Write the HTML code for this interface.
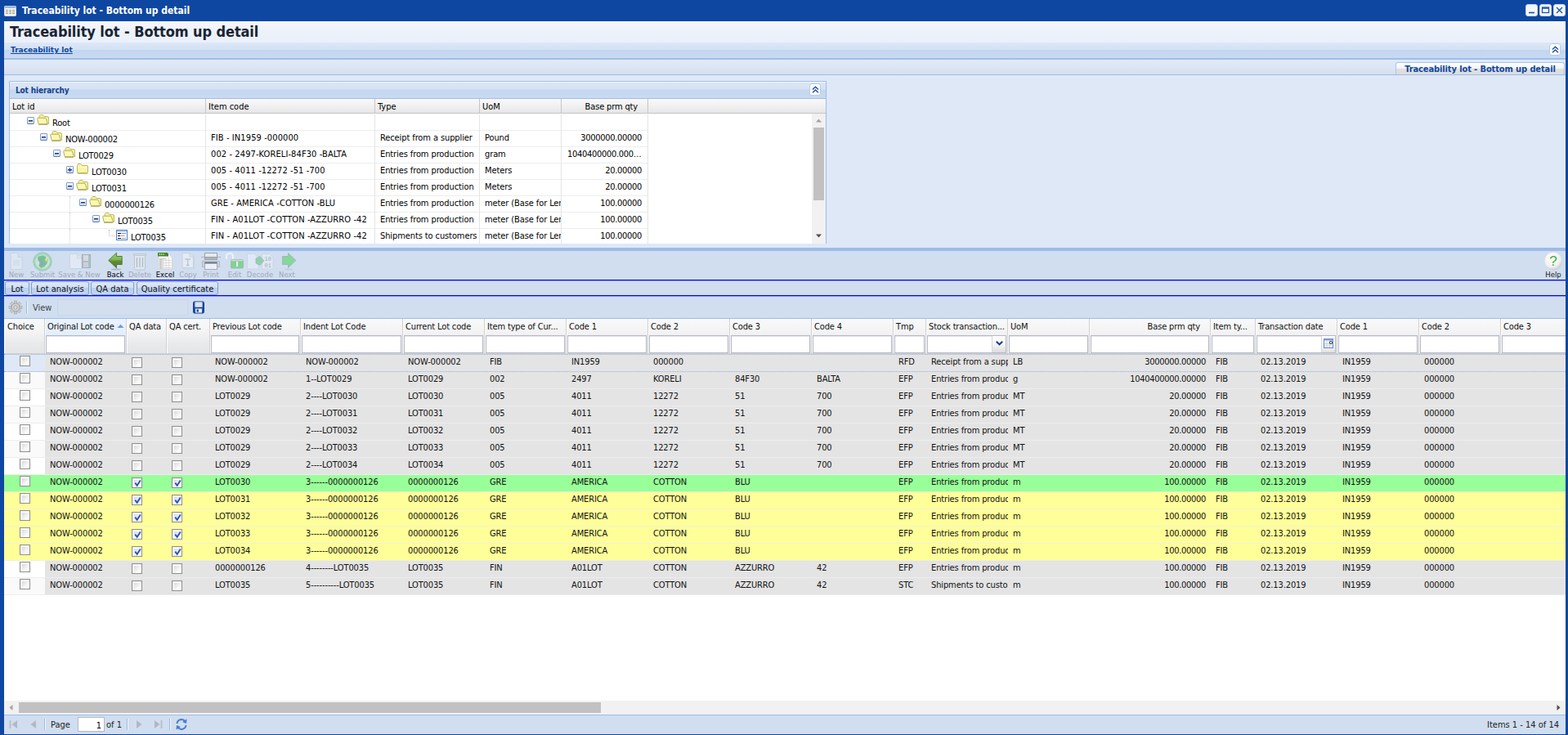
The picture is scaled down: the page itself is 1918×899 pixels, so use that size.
<!DOCTYPE html>
<html><head><meta charset="utf-8"><title>Traceability lot - Bottom up detail</title>
<style>
*{box-sizing:border-box;margin:0;padding:0}
html,body{width:1918px;height:899px;overflow:hidden;background:#0e47a1}
body{font:11px/13px "DejaVu Sans Condensed", "Liberation Sans", sans-serif;color:#000;position:relative}
.abs{position:absolute}
.t{position:absolute;white-space:nowrap;overflow:hidden}
svg{position:absolute;overflow:visible}
#content{position:absolute;left:5px;top:26px;width:1910px;height:872px;background:#d0def0}

#titlebar{position:absolute;left:0;top:0;width:1918px;height:26px;background:#0e47a1}
#titlebar .tt{position:absolute;left:27px;top:5px;font:bold 12px/16px "DejaVu Sans Condensed", "Liberation Sans", sans-serif;color:#fff;white-space:nowrap}
.wbtn{position:absolute;top:5px;width:15px;height:15px;background:#f3f7fd;border:1px solid #c5d6ee;border-radius:3px}
#pghead{position:absolute;left:5px;top:26px;width:1910px;height:26px;background:linear-gradient(#f5f8fc,#edf2fa 50%,#eaf0fa)}
#pghead .h{position:absolute;left:7px;top:0px;letter-spacing:-0.1px;font:bold 18px/25px "DejaVu Sans Condensed", "Liberation Sans", sans-serif;color:#1a2433;white-space:nowrap}
#crumb{position:absolute;left:5px;top:52px;width:1910px;height:21px;background:linear-gradient(#dde8f7 0,#d3e1f4 45%,#c3d6f0 50%,#c9daf2 100%);border-bottom:2px solid #9dbde9}
#crumb a{position:absolute;left:8px;top:3px;font:bold 9px/13px "DejaVu Sans","Liberation Sans",sans-serif;color:#0e47a1;text-decoration:underline;white-space:nowrap}
.collapse{position:absolute;width:14px;height:15px;background:#fdfeff;border:1px solid #b5cbea;border-radius:3px}
#tabstrip{position:absolute;left:5px;top:73px;width:1910px;height:19px;background:linear-gradient(#e1eaf7,#dce6f4 50%,#d4dff0);border-bottom:1px solid #9dbde9}
#rtab{position:absolute;left:1702px;top:3px;width:207px;height:15px;border:1px solid #a9c3ea;border-bottom:none;border-radius:3px 3px 0 0;background:linear-gradient(#ffffff 0,#f4f4f4 45%,#e0e0e0 55%,#dcdcdc 100%);font:bold 11px/15px "DejaVu Sans Condensed", "Liberation Sans", sans-serif;color:#0e47a1;text-align:center;white-space:nowrap;overflow:hidden;letter-spacing:-0.1px}
#bodybg{position:absolute;left:5px;top:92px;width:1910px;height:211px;background:#dfe8f6}


#lot{position:absolute;left:11px;top:99px;width:1000px;height:199px;border:1px solid #9dbde9;border-bottom:none;background:#fff;overflow:hidden}
#lot .hd{position:absolute;left:0;top:0;width:998px;height:21px;background:linear-gradient(#dbe7f7 0,#d5e2f5 45%,#c5d7f0 50%,#c9daf1 100%);border-bottom:1px solid #9dbde9;box-shadow:inset 0 1px 0 #f4f8fd}
#lot .hd span{position:absolute;left:7px;top:4px;letter-spacing:-0.15px;font:bold 10px/13px "DejaVu Sans Condensed", "Liberation Sans", sans-serif;color:#15428b;white-space:nowrap}
#lot .ch{position:absolute;left:0;top:21px;width:998px;height:18px;background:linear-gradient(#f9f9f9 0,#f1f1f1 50%,#e6e6e6 100%);border-bottom:1px solid #c5c5c5}
#lot .ch div{position:absolute;top:0;height:17px;border-right:1px solid #c5c5c5;padding:3px 0 0 3px;white-space:nowrap;overflow:hidden;line-height:13px}
.tr{position:absolute;left:0;width:781px;height:20px;border-bottom:1px solid #ededed}
.tr .c{position:absolute;top:0;height:20px;border-right:1px solid #e4e4e4;padding:2px 6px 0 6px;white-space:nowrap;overflow:hidden;line-height:13px;letter-spacing:-0.1px}
.tr .c0{left:0;width:240px;padding:0}
.tr .c1{left:240px;width:207px;letter-spacing:.1px}
.tr .c2{left:447px;width:128px}
.tr .c3{left:575px;width:100px}
.tr .c4{left:675px;width:106px;text-align:right;text-overflow:ellipsis;letter-spacing:-0.3px;padding-left:7px;padding-right:7px}
.tr .lbl{position:absolute;top:4px;line-height:13px;white-space:nowrap;letter-spacing:-0.2px}
.exp{position:absolute;width:9px;height:9px;border:1px solid #7d9bcb;border-bottom-color:#5d7fb3;border-radius:1.5px;background:linear-gradient(#fff 30%,#c8d8f0)}
.exp i{position:absolute;left:1px;top:3px;width:5px;height:1px;background:#16336e;box-shadow:0 .5px 0 #16336e}
.exp b{position:absolute;left:3px;top:1px;width:1px;height:5px;background:#1d3f7a}
.vsb{position:absolute;left:981px;top:39px;width:17px;height:159px;background:#f1f1f1}
.vsb .th{position:absolute;left:2px;top:17px;width:13px;height:89px;background:#c1c1c1}


#split{position:absolute;left:5px;top:303px;width:1910px;height:4px;background:#9cbbe8}
#tb{position:absolute;left:5px;top:307px;width:1910px;height:35px;background:#d0def0}
#tb .b{position:absolute;top:0;height:35px}
#tb .b span{position:absolute;left:50%;top:23px;transform:translateX(-50%);font:8.5px/12px "DejaVu Sans","Liberation Sans",sans-serif;white-space:nowrap;color:#000}
#tb .dis span{color:#a3a8b8}
.bl{position:absolute;left:5px;width:1910px;height:2px;background:linear-gradient(#0000ff 0,#0000ff 50%,rgba(0,0,255,.3) 50%,rgba(0,0,255,.3) 100%)}
#tabs{position:absolute;left:5px;top:344px;width:1910px;height:17px;background:#d0def0}
.tbtn{position:absolute;top:0px;height:17px;border:1px solid #7f9fca;border-radius:3px;background:linear-gradient(#dce7f7 0,#d2e0f4 45%,#b9cfee 50%,#c3d6f0 100%);font:11px/15px "DejaVu Sans Condensed", "Liberation Sans", sans-serif;padding-top:1px;text-align:center;color:#111;white-space:nowrap}
#vtb{position:absolute;left:5px;top:363px;width:1910px;height:27px;background:#d0def0;border-bottom:1px solid #9dbde9}
#vtb .fld{position:absolute;left:65px;top:3px;width:160px;height:20px;background:#d3dfef;border:1px solid #c9d7ea}


#grid{position:absolute;left:5px;top:390px;width:1910px;height:484px;background:#fff;overflow:hidden}
#gh{position:absolute;left:0;top:0;width:1910px;height:43px;background:linear-gradient(#f9f9f9 0,#f3f3f4 40%,#e9eaeb 70%,#e4e5e7 100%);border-bottom:1px solid #d0d0d0}
#gh .h{position:absolute;top:0;height:42px;border-right:1px solid #d0d0d0;border-left:1px solid #fdfdfd;padding:3px 0 0 2px;white-space:nowrap;overflow:hidden;color:#111;letter-spacing:-0.15px}
#gh .h.r{text-align:right;padding-right:12px}
#gh .h.sort{background:linear-gradient(#ebf3fd,#d9e8fb);}
#gh .f{position:absolute;top:20px;height:22px;background:#fff;border:1px solid #b5b8c8;box-shadow:inset 0 1px 1px #e3e6ee}
.gr{position:absolute;left:0;width:1910px;height:21px;background:#e4e4e4;border-bottom:1px solid #ededed}
.gr .c{position:absolute;top:0;height:20px;padding:2px 0 0 6px;white-space:nowrap;overflow:hidden;line-height:13px;color:#111;letter-spacing:-0.12px}
.gr .c.r{text-align:right;padding:2px 6px 0 0;letter-spacing:-0.3px}
.gr .c0{left:0;width:50px;height:20px;position:absolute;top:0}
.cb{position:absolute;width:13px;height:13px;border:1px solid #8f8f8f;background:#fff;box-shadow:inset 0 0 0 1px #f1f1f1}
.cb:before{content:"";position:absolute;left:2px;top:2px;width:9px;height:9px;background:linear-gradient(135deg,#d9d9d9,#fdfdfd 70%)}
.cb.on:before{border:0}
.gr.sel{border-top:1px dotted #8eb0e0;border-bottom:1px dotted #8eb0e0}
#hsb{position:absolute;left:0;top:467px;width:1910px;height:17px;background:#f1f1f1}
#hsb .th{position:absolute;left:18px;top:2px;width:712px;height:13px;background:#c1c1c1}
#pg{position:absolute;left:5px;top:874px;width:1910px;height:24px;background:#d0def0;border-top:1px solid #9dbde9}
#pg .sep{position:absolute;top:4px;width:1px;height:14px;background:#9fb9dc;border-right:1px solid #f4f8fd;box-sizing:content-box}
#pg .inp{position:absolute;left:90px;top:2px;width:33px;height:18px;background:#fff;border:1px solid #b5b8c8;text-align:right;padding:3px 3px 0 0;line-height:13px}
</style></head>
<body>
<div id="content"></div>
<div id="titlebar">
<svg width="16" height="14" viewBox="0 0 16 14" style="left:5px;top:7px"><rect x="0.5" y="0.5" width="14" height="12" rx="1" fill="#f4f4f2" stroke="#d8d8d8"/><rect x="0.5" y="0.5" width="14" height="2.5" fill="#9bb7e0"/><g stroke="#9a9a9a" stroke-width="1"><path d="M2 5.5h3M6 5.5h3M10 5.5h3M2 7.5h3M6 7.5h3M10 7.5h3M2 9.5h3M6 9.5h3M10 9.5h3"/></g></svg>
<span class="tt">Traceability lot - Bottom up detail</span>
<div class="wbtn" style="left:1866px"><svg width="13" height="13" viewBox="0 0 13 13" style="left:0;top:0"><path d="M3 9.5h7" stroke="#1d4f9f" stroke-width="1.6"/></svg></div>
<div class="wbtn" style="left:1883px"><svg width="13" height="13" viewBox="0 0 13 13" style="left:0;top:0"><rect x="2.5" y="3" width="8" height="6.5" fill="none" stroke="#1d4f9f" stroke-width="1.2"/><path d="M2.5 4h8" stroke="#1d4f9f" stroke-width="1.6"/></svg></div>
<div class="wbtn" style="left:1900px"><svg width="13" height="13" viewBox="0 0 13 13" style="left:0;top:0"><path d="M3 3l7 7M10 3l-7 7" stroke="#1d4f9f" stroke-width="1.3"/></svg></div>
</div>
<div id="pghead"><div class="h">Traceability lot - Bottom up detail</div></div>
<div id="crumb"><a>Traceability lot</a><div class="collapse" style="left:1890px;top:1px"><svg width="9" height="9" viewBox="0 0 9 9" style="left:2px;top:2px"><path d="M1 4.5 L4.5 1.2 L8 4.5 M1 8.3 L4.5 5 L8 8.3" fill="none" stroke="#1d4f9f" stroke-width="1.4"/></svg></div></div>
<div id="tabstrip"><div id="rtab">Traceability lot - Bottom up detail</div></div>
<div id="bodybg"></div>
<div id="lot">
<div class="hd"><span>Lot hierarchy</span><div class="collapse" style="left:978px;top:2px"><svg width="9" height="9" viewBox="0 0 9 9" style="left:2px;top:2px"><path d="M1 4.5 L4.5 1.2 L8 4.5 M1 8.3 L4.5 5 L8 8.3" fill="none" stroke="#1d4f9f" stroke-width="1.4"/></svg></div></div>
<div class="ch"><div style="left:0;width:240px">Lot id</div><div style="left:240px;width:207px">Item code</div><div style="left:447px;width:128px">Type</div><div style="left:575px;width:100px">UoM</div><div style="left:675px;width:106px;text-align:right;padding-right:12px;letter-spacing:-0.15px">Base prm qty</div></div>
<div class="tr" style="top:40px"><div class="c c0"><div class="exp" style="left:21px;top:3px"><i></i></div><svg width="16" height="14" viewBox="0 0 16 14" style="left:33px;top:0px"><path d="M3 2.500 q0-1.500 1.500-2 h2.500 q1 0 1.500 1 l.500 1 h4 q1.500 0 1.500 1.500 v7.500 h-11.500z" fill="#f5f2a0" stroke="#bfb965" stroke-width="1"/><path d="M.700 5.500 q-.300-1.300 1-1.300 h8.500 q1 0 1.300 1 l1.500 5.300 q.300 1.300-1 1.300 h-8.700 q-1 0-1.300-1z" fill="#fbf8b4" stroke="#b3ac58" stroke-width="1"/><path d="M2 12.300h11" stroke="#9c9650" stroke-width="1" opacity=".8"/></svg><span class="lbl" style="left:52px">Root</span></div><div class="c c1"></div><div class="c c2"></div><div class="c c3"></div><div class="c c4"></div></div>
<div class="tr" style="top:60px"><div class="c c0"><div class="exp" style="left:37px;top:3px"><i></i></div><svg width="16" height="14" viewBox="0 0 16 14" style="left:49px;top:0px"><path d="M3 2.500 q0-1.500 1.500-2 h2.500 q1 0 1.500 1 l.500 1 h4 q1.500 0 1.500 1.500 v7.500 h-11.500z" fill="#f5f2a0" stroke="#bfb965" stroke-width="1"/><path d="M.700 5.500 q-.300-1.300 1-1.300 h8.500 q1 0 1.300 1 l1.500 5.300 q.300 1.300-1 1.300 h-8.700 q-1 0-1.300-1z" fill="#fbf8b4" stroke="#b3ac58" stroke-width="1"/><path d="M2 12.300h11" stroke="#9c9650" stroke-width="1" opacity=".8"/></svg><span class="lbl" style="left:68px">NOW-000002</span></div><div class="c c1">FIB - IN1959 -000000</div><div class="c c2">Receipt from a supplier</div><div class="c c3">Pound</div><div class="c c4">3000000.00000</div></div>
<div class="tr" style="top:80px"><div class="c c0"><div class="exp" style="left:53px;top:3px"><i></i></div><svg width="16" height="14" viewBox="0 0 16 14" style="left:65px;top:0px"><path d="M3 2.500 q0-1.500 1.500-2 h2.500 q1 0 1.500 1 l.500 1 h4 q1.500 0 1.500 1.500 v7.500 h-11.500z" fill="#f5f2a0" stroke="#bfb965" stroke-width="1"/><path d="M.700 5.500 q-.300-1.300 1-1.300 h8.500 q1 0 1.300 1 l1.500 5.300 q.300 1.300-1 1.300 h-8.700 q-1 0-1.300-1z" fill="#fbf8b4" stroke="#b3ac58" stroke-width="1"/><path d="M2 12.300h11" stroke="#9c9650" stroke-width="1" opacity=".8"/></svg><span class="lbl" style="left:84px">LOT0029</span></div><div class="c c1">002 - 2497-KORELI-84F30 -BALTA</div><div class="c c2">Entries from production</div><div class="c c3">gram</div><div class="c c4">1040400000.00000</div></div>
<div class="tr" style="top:100px"><div class="c c0"><div class="exp" style="left:69px;top:3px"><i></i><b></b></div><svg width="16" height="14" viewBox="0 0 16 14" style="left:81px;top:0px"><path d="M1.500 2.500 q0-1.500 1.500-2 h2.500 q1 0 1.500 1 l.500 1 h5.500 q1.500 0 1.500 1.500 v6.500 q0 1.500-1.500 1.500 h-10 q-1.500 0-1.500-1.500z" fill="#f8f5a6" stroke="#bdb762" stroke-width="1"/><path d="M2 4.500h11.500" stroke="#fdfbd0" stroke-width="1"/><path d="M2 11.800h12" stroke="#9c9650" stroke-width="1" opacity=".8"/></svg><span class="lbl" style="left:100px">LOT0030</span></div><div class="c c1">005 - 4011 -12272 -51 -700</div><div class="c c2">Entries from production</div><div class="c c3">Meters</div><div class="c c4">20.00000</div></div>
<div class="tr" style="top:120px"><div class="c c0"><div class="exp" style="left:69px;top:3px"><i></i></div><svg width="16" height="14" viewBox="0 0 16 14" style="left:81px;top:0px"><path d="M3 2.500 q0-1.500 1.500-2 h2.500 q1 0 1.500 1 l.500 1 h4 q1.500 0 1.500 1.500 v7.500 h-11.500z" fill="#f5f2a0" stroke="#bfb965" stroke-width="1"/><path d="M.700 5.500 q-.300-1.300 1-1.300 h8.500 q1 0 1.300 1 l1.500 5.300 q.300 1.300-1 1.300 h-8.700 q-1 0-1.300-1z" fill="#fbf8b4" stroke="#b3ac58" stroke-width="1"/><path d="M2 12.300h11" stroke="#9c9650" stroke-width="1" opacity=".8"/></svg><span class="lbl" style="left:100px">LOT0031</span></div><div class="c c1">005 - 4011 -12272 -51 -700</div><div class="c c2">Entries from production</div><div class="c c3">Meters</div><div class="c c4">20.00000</div></div>
<div class="tr" style="top:140px"><div class="c c0"><div class="abs" style="left:73px;top:0;width:1px;height:20px;border-left:1px dotted #cfcfcf"></div><div class="exp" style="left:85px;top:3px"><i></i></div><svg width="16" height="14" viewBox="0 0 16 14" style="left:97px;top:0px"><path d="M3 2.500 q0-1.500 1.500-2 h2.500 q1 0 1.500 1 l.500 1 h4 q1.500 0 1.500 1.500 v7.500 h-11.500z" fill="#f5f2a0" stroke="#bfb965" stroke-width="1"/><path d="M.700 5.500 q-.300-1.300 1-1.300 h8.500 q1 0 1.300 1 l1.500 5.300 q.300 1.300-1 1.300 h-8.700 q-1 0-1.300-1z" fill="#fbf8b4" stroke="#b3ac58" stroke-width="1"/><path d="M2 12.300h11" stroke="#9c9650" stroke-width="1" opacity=".8"/></svg><span class="lbl" style="left:116px">0000000126</span></div><div class="c c1">GRE - AMERICA -COTTON -BLU</div><div class="c c2">Entries from production</div><div class="c c3">meter (Base for Length)</div><div class="c c4">100.00000</div></div>
<div class="tr" style="top:160px"><div class="c c0"><div class="abs" style="left:73px;top:0;width:1px;height:20px;border-left:1px dotted #cfcfcf"></div><div class="exp" style="left:101px;top:3px"><i></i></div><svg width="16" height="14" viewBox="0 0 16 14" style="left:113px;top:0px"><path d="M3 2.500 q0-1.500 1.500-2 h2.500 q1 0 1.500 1 l.500 1 h4 q1.500 0 1.500 1.500 v7.500 h-11.500z" fill="#f5f2a0" stroke="#bfb965" stroke-width="1"/><path d="M.700 5.500 q-.300-1.300 1-1.300 h8.500 q1 0 1.300 1 l1.500 5.300 q.300 1.300-1 1.300 h-8.700 q-1 0-1.300-1z" fill="#fbf8b4" stroke="#b3ac58" stroke-width="1"/><path d="M2 12.300h11" stroke="#9c9650" stroke-width="1" opacity=".8"/></svg><span class="lbl" style="left:132px">LOT0035</span></div><div class="c c1">FIN - A01LOT -COTTON -AZZURRO -42</div><div class="c c2">Entries from production</div><div class="c c3">meter (Base for Length)</div><div class="c c4">100.00000</div></div>
<div class="tr" style="top:180px"><div class="c c0"><div class="abs" style="left:73px;top:0;width:1px;height:20px;border-left:1px dotted #cfcfcf"></div><div class="abs" style="left:121px;top:1px;width:7px;height:8px;border-left:1px dotted #bbb;border-bottom:1px dotted #bbb"></div><svg width="14" height="13" viewBox="0 0 14 13" style="left:130px;top:1px"><rect x=".500" y=".500" width="13" height="12" fill="#fff" stroke="#4f7fcf"/><rect x="1" y="1" width="12" height="2" fill="#b9d0f0"/><path d="M2 4.500h4M2 7.500h3M2 10.500h4" stroke="#111" stroke-width="1"/><path d="M6.500 4.500h5.500M5.500 7.500h5M6.500 10.500h5.500" stroke="#9a9a9a" stroke-width="1"/></svg><span class="lbl" style="left:148px">LOT0035</span></div><div class="c c1">FIN - A01LOT -COTTON -AZZURRO -42</div><div class="c c2">Shipments to customers</div><div class="c c3">meter (Base for Length)</div><div class="c c4">100.00000</div></div>
<div class="vsb"><svg width="17" height="17" viewBox="0 0 17 17" style="left:0;top:0"><path d="M5 10.5 L8.5 6.5 L12 10.5z" fill="#a3a3a3"/></svg><div class="th"></div><svg width="17" height="17" viewBox="0 0 17 17" style="left:0;top:141px"><path d="M5 6.5 L8.5 10.5 L12 6.5z" fill="#505050"/></svg></div>
</div>
<div id="split"></div>
<div id="tb">
<div class="b dis" style="left:3px;width:24px"><svg width="16" height="21" viewBox="0 0 16 21" style="left:4px;top:2px;opacity:0.27"><path d="M1 .5h9l5 5v15h-14z" fill="#fff" stroke="#b9b9b9"/><path d="M10 .5v5h5" fill="#ececec" stroke="#b9b9b9"/><path d="M4 10h8M4 12.500h8M4 15h8" stroke="#bdbdbd"/></svg><span>New</span></div>
<div class="b dis" style="left:31px;width:32px"><svg width="24" height="24" viewBox="0 0 24 24" style="left:4px;top:1px;opacity:0.54"><circle cx="12" cy="12" r="11.200" fill="#d9dcd9" stroke="#8c8c8c" stroke-width="1"/><circle cx="12" cy="12" r="9.800" fill="none" stroke="#5fe070" stroke-width="2"/><path d="M6 6.500q3-2.500 7-2l3 1.500 2.500 3.500-1 5-3.500 4-4 1.500-2.500-3 1-4-2-2.500z" fill="#35a84e"/><path d="M16.500 6l1.500 3.500-1.500 3-1.200-3z" fill="#f2ea3a"/><circle cx="9" cy="10" r="1" fill="#3a6fd0"/><circle cx="12" cy="12.500" r="1" fill="#3a6fd0"/><circle cx="11" cy="15.500" r="1" fill="#3a6fd0"/></svg><span>Submit</span></div>
<div class="b dis" style="left:63px;width:58px"><svg width="27" height="19" viewBox="0 0 27 19" style="left:17px;top:3px;opacity:0.47"><path d="M.500 .500h9l5.500 5.500v12.500h-14.500z" fill="#fff" stroke="#c4c4c4" opacity=".75"/><path d="M9.500 .500v5.500h5.500" fill="#eee" stroke="#c4c4c4" opacity=".75"/><rect x="15.500" y="1.500" width="10" height="16" fill="#9a9a9a" stroke="#7a7a7a"/><rect x="17" y="2" width="6" height="7" fill="#d9d9d9"/><rect x="17" y="11" width="6" height="6" fill="#c2c4cc"/><path d="M24.500 2.500v14" stroke="#35c94a" stroke-width="1.600" stroke-dasharray="1.500 1.200"/></svg><span>Save &amp; New</span></div>
<div class="b" style="left:123px;width:26px"><svg width="20" height="24" viewBox="0 0 20 24" style="left:4px;top:1px"><defs><linearGradient id="bk" x1="0" y1="0" x2="0" y2="1"><stop offset="0" stop-color="#9ad873"/><stop offset=".45" stop-color="#7fb552"/><stop offset=".55" stop-color="#5f8c35"/><stop offset="1" stop-color="#557f2e"/></linearGradient></defs><ellipse cx="10" cy="21.500" rx="6.500" ry="1.200" fill="#8f9cb4" opacity=".55"/><path d="M.800 10.500 L10.500 1.200 L10.500 5.500 L17.200 5.500 L17.200 15.500 L10.500 15.500 L10.500 19.800z" fill="url(#bk)" stroke="#4c7328" stroke-width=".9"/></svg><span>Back</span></div>
<div class="b dis" style="left:151px;width:30px"><svg width="16" height="21" viewBox="0 0 16 21" style="left:7px;top:3px;opacity:0.43"><path d="M1.500 2.500h13v16q0 1.500-1.500 1.500h-10q-1.500 0-1.500-1.500z" fill="#f4f4f6" stroke="#a5a5a5"/><path d="M.500 .500h15v2h-15z" fill="#e4e4e4" stroke="#a5a5a5"/><path d="M4.500 5v12M8 5v12M11.500 5v12" stroke="#8a8a8a" stroke-width="1.300"/></svg><span>Delete</span></div>
<div class="b" style="left:185px;width:24px"><svg width="19" height="21" viewBox="0 0 19 21" style="left:3px;top:2px"><path d="M1 .500h11l5.500 5.500v14h-16.500z" fill="#fff" stroke="#d4d4d4"/><path d="M12 .500v5.500h5.500z" fill="#fff" stroke="#d9d9d9" stroke-width=".6"/><path d="M0 0h11.500l1.500 1.500v3h-13z" fill="#4a7f2e"/><path d="M1.500 2h7" stroke="#9af07a" stroke-width="2" stroke-dasharray="1.300 .9"/><path d="M2 9.500h14.500M2 12.500h14.500M2 15.500h14.500M2 18.500h14.500M6.500 7v13M10 7v13M13.500 7v13" stroke="#dadada" stroke-width="1"/><rect x="2" y="7" width="3.500" height="13" fill="#cfcfcf"/><path d="M2 7.500h8" stroke="#c4c4c4"/></svg><span>Excel</span></div>
<div class="b dis" style="left:213px;width:24px"><svg width="18" height="21" viewBox="0 0 18 21" style="left:4px;top:2px;opacity:0.40"><path d="M3 2.500h12.500v17.500h-12.500z" fill="#f6f6f8" stroke="#c6c6c6"/><path d="M1 .500h9l4.500 4.500v13.500h-13.500z" fill="#fff" stroke="#bcbcbc"/><path d="M10 .500v4.500h4.500" fill="#eee" stroke="#bcbcbc"/><path d="M4.500 8h6.500M7.750 8v7.500M6 15.500h3.500" stroke="#9a9a9a" stroke-width="1.300" fill="none"/></svg><span>Copy</span></div>
<div class="b dis" style="left:240px;width:26px"><svg width="24" height="21" viewBox="0 0 24 21" style="left:1px;top:2px;opacity:0.61"><rect x="4.500" y=".500" width="15" height="8" fill="#f2f2f2" stroke="#7d7d7d"/><path d="M5 5.500h14M5 7h14" stroke="#444" stroke-width="1"/><path d="M0 5.500h24" stroke="#8a8a8a" stroke-width=".8"/><path d="M1.500 10.500h21v7h-21z" fill="#c9ccd4" stroke="#9aa0ad"/><rect x="4.500" y="12.500" width="15" height="8" fill="#fcfcfc" stroke="#8a8a8a"/><path d="M4.500 12.500h15" stroke="#1c1c1c" stroke-width="1.800"/></svg><span>Print</span></div>
<div class="b dis" style="left:270px;width:24px"><svg width="23" height="20" viewBox="0 0 23 20" style="left:0px;top:2px;opacity:0.61"><path d="M2 8v-3.500q0-3.500 4-3.500t4 3.500v4" fill="none" stroke="#fff" stroke-width="2.200"/><rect x="7.500" y="8.500" width="15" height="10.500" rx="1" fill="#49cf52" stroke="#8f9f8f"/><path d="M7.500 9.500h15" stroke="#d5d5d5" stroke-width="1.500"/><rect x="14" y="11" width="2" height="6" fill="#f8f8f8"/></svg><span>Edit</span></div>
<div class="b dis" style="left:295px;width:36px"><svg width="33" height="20" viewBox="0 0 33 20" style="left:2px;top:3px;opacity:0.47"><g opacity=".7"><path d="M.500 .500h9l4.500 4.500v14h-13.500z" fill="#fff" stroke="#c9c9c9"/><path d="M18.500 .500h9l4.500 4.500v14h-13.500z" fill="#fff" stroke="#c9c9c9"/></g><path d="M11 6l5-2.500 5 5.500-5 5.500-5-2.500z" fill="#49c552" stroke="#7b8ca8" stroke-width=".9"/><text x="21.500" y="9" font-size="7" font-family="Liberation Mono,monospace" fill="#777">10</text><text x="21.500" y="16.500" font-size="7" font-family="Liberation Mono,monospace" fill="#777">01</text></svg><span>Decode</span></div>
<div class="b dis" style="left:334px;width:24px"><svg width="20" height="24" viewBox="0 0 20 24" style="left:4px;top:1px;opacity:0.58"><ellipse cx="10" cy="21.500" rx="5" ry="1" fill="#8f9cb4" opacity=".4"/><path d="M18.800 10.500 L9.500 1.500 L9.500 5.500 L2.500 5.500 L2.500 15.500 L9.500 15.500 L9.500 19.500z" fill="#4fd45c" stroke="#8a98a6" stroke-width="1"/></svg><span>Next</span></div>
<div class="b" style="left:1881px;width:28px"><svg width="24" height="24" viewBox="0 0 24 24" style="left:2px;top:0px"><defs><radialGradient id="hg" cx="40%" cy="35%" r="70%"><stop offset="0" stop-color="#ffffff"/><stop offset=".7" stop-color="#f0f0f0"/><stop offset="1" stop-color="#c9c9c9"/></radialGradient></defs><circle cx="12" cy="12" r="11" fill="url(#hg)" stroke="#d0d0d0" stroke-width=".6"/><text x="12" y="18" text-anchor="middle" font-size="17" font-family="Liberation Sans,sans-serif" fill="#3cb043">?</text></svg><span style="color:#222">Help</span></div>
</div>
<div class="bl" style="top:342px"></div>
<div id="tabs">
<div class="tbtn" style="left:1px;width:30px">Lot</div>
<div class="tbtn" style="left:33px;width:71px">Lot analysis</div>
<div class="tbtn" style="left:106px;width:53px">QA data</div>
<div class="tbtn" style="left:162px;width:100px">Quality certificate</div>
</div>
<div class="bl" style="top:361px"></div>
<div id="vtb">
<svg width="16" height="16" viewBox="-8 -8 16 16" style="left:6px;top:5px"><rect x="-1.600" y="-8" width="3.200" height="4" fill="#c9c9c9" stroke="#9a9a9a" stroke-width=".5" transform="rotate(0)"/><rect x="-1.600" y="-8" width="3.200" height="4" fill="#c9c9c9" stroke="#9a9a9a" stroke-width=".5" transform="rotate(45)"/><rect x="-1.600" y="-8" width="3.200" height="4" fill="#c9c9c9" stroke="#9a9a9a" stroke-width=".5" transform="rotate(90)"/><rect x="-1.600" y="-8" width="3.200" height="4" fill="#c9c9c9" stroke="#9a9a9a" stroke-width=".5" transform="rotate(135)"/><rect x="-1.600" y="-8" width="3.200" height="4" fill="#c9c9c9" stroke="#9a9a9a" stroke-width=".5" transform="rotate(180)"/><rect x="-1.600" y="-8" width="3.200" height="4" fill="#c9c9c9" stroke="#9a9a9a" stroke-width=".5" transform="rotate(225)"/><rect x="-1.600" y="-8" width="3.200" height="4" fill="#c9c9c9" stroke="#9a9a9a" stroke-width=".5" transform="rotate(270)"/><rect x="-1.600" y="-8" width="3.200" height="4" fill="#c9c9c9" stroke="#9a9a9a" stroke-width=".5" transform="rotate(315)"/><circle r="5" fill="#d2d2d2" stroke="#9a9a9a" stroke-width=".8"/><circle r="2.200" fill="#d0def0" stroke="#9a9a9a" stroke-width=".8"/></svg>
<div class="abs" style="left:27px;top:5px;width:1px;height:15px;background:#9fb9dc"></div><div class="abs" style="left:28px;top:5px;width:1px;height:15px;background:#f4f8fd"></div>
<div class="t" style="left:35px;top:7px;color:#444">View</div>
<div class="fld"></div>
<svg width="16" height="16" viewBox="0 0 16 16" style="left:230px;top:5px"><path d="M1.500 2.500q0-1.500 1.500-1.500h10q1.500 0 1.500 1.500v11q0 1.500-1.500 1.500h-10q-1.500 0-1.500-1.500z" fill="#1f4fa8" stroke="#163a85" stroke-width="1"/><rect x="3.500" y="1.500" width="9" height="6" fill="#f7f8fb"/><path d="M4 3.500h8M4 5.500h8" stroke="#c3ccdc"/><rect x="4" y="9.500" width="8" height="5" fill="#e9edf5"/><rect x="5.500" y="10.500" width="2.500" height="3" fill="#1f4fa8"/></svg>
</div>
<div id="grid">
<div id="gh">
<div class="h " style="left:0px;width:50px;padding-left:3px">Choice</div>
<div class="h sort" style="left:50px;width:100px">Original Lot code<svg width="9" height="6" viewBox="0 0 9 6" style="left:87px;top:6px"><path d="M0.500 5 L4.500 0.800 L8.500 5z" fill="#6f9bd6"/></svg></div>
<div class="f" style="left:51px;width:97px"></div>
<div class="h " style="left:150px;width:49px">QA data</div>
<div class="h " style="left:199px;width:53px">QA cert.</div>
<div class="h " style="left:252px;width:111px">Previous Lot code</div>
<div class="f" style="left:253px;width:108px"></div>
<div class="h " style="left:363px;width:125px">Indent Lot Code</div>
<div class="f" style="left:364px;width:122px"></div>
<div class="h " style="left:488px;width:100px">Current Lot code</div>
<div class="f" style="left:489px;width:97px"></div>
<div class="h " style="left:588px;width:100px">Item type of Cur...</div>
<div class="f" style="left:589px;width:97px"></div>
<div class="h " style="left:688px;width:100px">Code 1</div>
<div class="f" style="left:689px;width:97px"></div>
<div class="h " style="left:788px;width:100px">Code 2</div>
<div class="f" style="left:789px;width:97px"></div>
<div class="h " style="left:888px;width:100px">Code 3</div>
<div class="f" style="left:889px;width:97px"></div>
<div class="h " style="left:988px;width:100px">Code 4</div>
<div class="f" style="left:989px;width:97px"></div>
<div class="h " style="left:1088px;width:40px">Tmp</div>
<div class="f" style="left:1089px;width:37px"></div>
<div class="h " style="left:1128px;width:100px">Stock transaction...</div>
<div class="f" style="left:1129px;width:97px"></div>
<div class="h " style="left:1228px;width:100px">UoM</div>
<div class="f" style="left:1229px;width:97px"></div>
<div class="h r" style="left:1328px;width:148px">Base prm qty</div>
<div class="f" style="left:1329px;width:145px"></div>
<div class="h " style="left:1476px;width:55px">Item ty...</div>
<div class="f" style="left:1477px;width:52px"></div>
<div class="h " style="left:1531px;width:100px">Transaction date</div>
<div class="f" style="left:1532px;width:97px"></div>
<div class="h " style="left:1631px;width:100px">Code 1</div>
<div class="f" style="left:1632px;width:97px"></div>
<div class="h " style="left:1731px;width:100px">Code 2</div>
<div class="f" style="left:1732px;width:97px"></div>
<div class="h " style="left:1831px;width:100px">Code 3</div>
<div class="f" style="left:1832px;width:97px"></div>
<div class="abs" style="left:1208px;top:21px;width:17px;height:20px;background:linear-gradient(#fff 0,#f4f4f4 55%,#dcdcdc 100%);border-left:1px solid #d5d8e0"><svg width="11" height="8" viewBox="0 0 11 8" style="left:3px;top:5px"><path d="M1.800 1.800 L5.500 5.300 L9.200 1.800" fill="none" stroke="#12408f" stroke-width="2"/></svg></div>
<div class="abs" style="left:1611px;top:21px;width:17px;height:20px;background:linear-gradient(#fff 0,#fbfbfb 60%,#dedede 100%);border-left:1px solid #d5d8e0"><svg width="12" height="12" viewBox="0 0 12 12" style="left:2px;top:3px"><rect x=".500" y=".500" width="11" height="11" fill="#fff" stroke="#5f86c6"/><rect x=".500" y=".500" width="11" height="2" fill="#7f9fd6"/><path d="M1 6.500h10M1 9h10M4 3v8M7.500 3v8" stroke="#c9d0dc" stroke-width="1"/><circle cx="9" cy="5" r="1.600" fill="#fff" stroke="#222" stroke-width=".9"/></svg></div>
</div>
<div class="gr sel" style="top:43px;height:22px;z-index:2;background:#e4e4e4">
<div class="c0" style="background:#dfe8f6"></div>
<div class="cb" style="left:19px;top:1px"></div>
<div class="c" style="left:50px;width:100px">NOW-000002</div>
<div class="cb" style="left:156px;top:3px"></div>
<div class="cb" style="left:205px;top:3px"></div>
<div class="c" style="left:252px;width:111px">NOW-000002</div>
<div class="c" style="left:363px;width:125px">NOW-000002</div>
<div class="c" style="left:488px;width:100px">NOW-000002</div>
<div class="c" style="left:588px;width:100px">FIB</div>
<div class="c" style="left:688px;width:100px">IN1959</div>
<div class="c" style="left:788px;width:100px">000000</div>
<div class="c" style="left:888px;width:100px"></div>
<div class="c" style="left:988px;width:100px"></div>
<div class="c" style="left:1088px;width:40px">RFD</div>
<div class="c" style="left:1128px;width:100px">Receipt from a supplier</div>
<div class="c" style="left:1228px;width:100px">LB</div>
<div class="c r" style="left:1328px;width:148px">3000000.00000</div>
<div class="c" style="left:1476px;width:55px">FIB</div>
<div class="c" style="left:1531px;width:100px">02.13.2019</div>
<div class="c" style="left:1631px;width:100px">IN1959</div>
<div class="c" style="left:1731px;width:100px">000000</div>
<div class="c" style="left:1831px;width:100px"></div>
</div>
<div class="gr" style="top:65px;background:#e4e4e4;border-bottom-color:#ededed">
<div class="c0" style="background:#fafafa"></div>
<div class="cb" style="left:19px;top:1px"></div>
<div class="c" style="left:50px;width:100px">NOW-000002</div>
<div class="cb" style="left:156px;top:3px"></div>
<div class="cb" style="left:205px;top:3px"></div>
<div class="c" style="left:252px;width:111px">NOW-000002</div>
<div class="c" style="left:363px;width:125px">1--LOT0029</div>
<div class="c" style="left:488px;width:100px">LOT0029</div>
<div class="c" style="left:588px;width:100px">002</div>
<div class="c" style="left:688px;width:100px">2497</div>
<div class="c" style="left:788px;width:100px">KORELI</div>
<div class="c" style="left:888px;width:100px">84F30</div>
<div class="c" style="left:988px;width:100px">BALTA</div>
<div class="c" style="left:1088px;width:40px">EFP</div>
<div class="c" style="left:1128px;width:100px">Entries from production</div>
<div class="c" style="left:1228px;width:100px">g</div>
<div class="c r" style="left:1328px;width:148px">1040400000.00000</div>
<div class="c" style="left:1476px;width:55px">FIB</div>
<div class="c" style="left:1531px;width:100px">02.13.2019</div>
<div class="c" style="left:1631px;width:100px">IN1959</div>
<div class="c" style="left:1731px;width:100px">000000</div>
<div class="c" style="left:1831px;width:100px"></div>
</div>
<div class="gr" style="top:86px;background:#e4e4e4;border-bottom-color:#ededed">
<div class="c0" style="background:#fff"></div>
<div class="cb" style="left:19px;top:1px"></div>
<div class="c" style="left:50px;width:100px">NOW-000002</div>
<div class="cb" style="left:156px;top:3px"></div>
<div class="cb" style="left:205px;top:3px"></div>
<div class="c" style="left:252px;width:111px">LOT0029</div>
<div class="c" style="left:363px;width:125px">2----LOT0030</div>
<div class="c" style="left:488px;width:100px">LOT0030</div>
<div class="c" style="left:588px;width:100px">005</div>
<div class="c" style="left:688px;width:100px">4011</div>
<div class="c" style="left:788px;width:100px">12272</div>
<div class="c" style="left:888px;width:100px">51</div>
<div class="c" style="left:988px;width:100px">700</div>
<div class="c" style="left:1088px;width:40px">EFP</div>
<div class="c" style="left:1128px;width:100px">Entries from production</div>
<div class="c" style="left:1228px;width:100px">MT</div>
<div class="c r" style="left:1328px;width:148px">20.00000</div>
<div class="c" style="left:1476px;width:55px">FIB</div>
<div class="c" style="left:1531px;width:100px">02.13.2019</div>
<div class="c" style="left:1631px;width:100px">IN1959</div>
<div class="c" style="left:1731px;width:100px">000000</div>
<div class="c" style="left:1831px;width:100px"></div>
</div>
<div class="gr" style="top:107px;background:#e4e4e4;border-bottom-color:#ededed">
<div class="c0" style="background:#fafafa"></div>
<div class="cb" style="left:19px;top:1px"></div>
<div class="c" style="left:50px;width:100px">NOW-000002</div>
<div class="cb" style="left:156px;top:3px"></div>
<div class="cb" style="left:205px;top:3px"></div>
<div class="c" style="left:252px;width:111px">LOT0029</div>
<div class="c" style="left:363px;width:125px">2----LOT0031</div>
<div class="c" style="left:488px;width:100px">LOT0031</div>
<div class="c" style="left:588px;width:100px">005</div>
<div class="c" style="left:688px;width:100px">4011</div>
<div class="c" style="left:788px;width:100px">12272</div>
<div class="c" style="left:888px;width:100px">51</div>
<div class="c" style="left:988px;width:100px">700</div>
<div class="c" style="left:1088px;width:40px">EFP</div>
<div class="c" style="left:1128px;width:100px">Entries from production</div>
<div class="c" style="left:1228px;width:100px">MT</div>
<div class="c r" style="left:1328px;width:148px">20.00000</div>
<div class="c" style="left:1476px;width:55px">FIB</div>
<div class="c" style="left:1531px;width:100px">02.13.2019</div>
<div class="c" style="left:1631px;width:100px">IN1959</div>
<div class="c" style="left:1731px;width:100px">000000</div>
<div class="c" style="left:1831px;width:100px"></div>
</div>
<div class="gr" style="top:128px;background:#e4e4e4;border-bottom-color:#ededed">
<div class="c0" style="background:#fff"></div>
<div class="cb" style="left:19px;top:1px"></div>
<div class="c" style="left:50px;width:100px">NOW-000002</div>
<div class="cb" style="left:156px;top:3px"></div>
<div class="cb" style="left:205px;top:3px"></div>
<div class="c" style="left:252px;width:111px">LOT0029</div>
<div class="c" style="left:363px;width:125px">2----LOT0032</div>
<div class="c" style="left:488px;width:100px">LOT0032</div>
<div class="c" style="left:588px;width:100px">005</div>
<div class="c" style="left:688px;width:100px">4011</div>
<div class="c" style="left:788px;width:100px">12272</div>
<div class="c" style="left:888px;width:100px">51</div>
<div class="c" style="left:988px;width:100px">700</div>
<div class="c" style="left:1088px;width:40px">EFP</div>
<div class="c" style="left:1128px;width:100px">Entries from production</div>
<div class="c" style="left:1228px;width:100px">MT</div>
<div class="c r" style="left:1328px;width:148px">20.00000</div>
<div class="c" style="left:1476px;width:55px">FIB</div>
<div class="c" style="left:1531px;width:100px">02.13.2019</div>
<div class="c" style="left:1631px;width:100px">IN1959</div>
<div class="c" style="left:1731px;width:100px">000000</div>
<div class="c" style="left:1831px;width:100px"></div>
</div>
<div class="gr" style="top:149px;background:#e4e4e4;border-bottom-color:#ededed">
<div class="c0" style="background:#fafafa"></div>
<div class="cb" style="left:19px;top:1px"></div>
<div class="c" style="left:50px;width:100px">NOW-000002</div>
<div class="cb" style="left:156px;top:3px"></div>
<div class="cb" style="left:205px;top:3px"></div>
<div class="c" style="left:252px;width:111px">LOT0029</div>
<div class="c" style="left:363px;width:125px">2----LOT0033</div>
<div class="c" style="left:488px;width:100px">LOT0033</div>
<div class="c" style="left:588px;width:100px">005</div>
<div class="c" style="left:688px;width:100px">4011</div>
<div class="c" style="left:788px;width:100px">12272</div>
<div class="c" style="left:888px;width:100px">51</div>
<div class="c" style="left:988px;width:100px">700</div>
<div class="c" style="left:1088px;width:40px">EFP</div>
<div class="c" style="left:1128px;width:100px">Entries from production</div>
<div class="c" style="left:1228px;width:100px">MT</div>
<div class="c r" style="left:1328px;width:148px">20.00000</div>
<div class="c" style="left:1476px;width:55px">FIB</div>
<div class="c" style="left:1531px;width:100px">02.13.2019</div>
<div class="c" style="left:1631px;width:100px">IN1959</div>
<div class="c" style="left:1731px;width:100px">000000</div>
<div class="c" style="left:1831px;width:100px"></div>
</div>
<div class="gr" style="top:170px;background:#e4e4e4;border-bottom-color:#ededed">
<div class="c0" style="background:#fff"></div>
<div class="cb" style="left:19px;top:1px"></div>
<div class="c" style="left:50px;width:100px">NOW-000002</div>
<div class="cb" style="left:156px;top:3px"></div>
<div class="cb" style="left:205px;top:3px"></div>
<div class="c" style="left:252px;width:111px">LOT0029</div>
<div class="c" style="left:363px;width:125px">2----LOT0034</div>
<div class="c" style="left:488px;width:100px">LOT0034</div>
<div class="c" style="left:588px;width:100px">005</div>
<div class="c" style="left:688px;width:100px">4011</div>
<div class="c" style="left:788px;width:100px">12272</div>
<div class="c" style="left:888px;width:100px">51</div>
<div class="c" style="left:988px;width:100px">700</div>
<div class="c" style="left:1088px;width:40px">EFP</div>
<div class="c" style="left:1128px;width:100px">Entries from production</div>
<div class="c" style="left:1228px;width:100px">MT</div>
<div class="c r" style="left:1328px;width:148px">20.00000</div>
<div class="c" style="left:1476px;width:55px">FIB</div>
<div class="c" style="left:1531px;width:100px">02.13.2019</div>
<div class="c" style="left:1631px;width:100px">IN1959</div>
<div class="c" style="left:1731px;width:100px">000000</div>
<div class="c" style="left:1831px;width:100px"></div>
</div>
<div class="gr" style="top:191px;background:#99ff99;border-bottom-color:#e3f3d3">
<div class="cb" style="left:19px;top:1px"></div>
<div class="c" style="left:50px;width:100px">NOW-000002</div>
<div class="cb on" style="left:156px;top:3px"><svg width="9" height="9" viewBox="0 0 9 9" style="left:2px;top:2px"><path d="M1.300 3.600 L3.700 6.800 L7.800 .600" fill="none" stroke="#2a55b8" stroke-width="1.900"/></svg></div>
<div class="cb on" style="left:205px;top:3px"><svg width="9" height="9" viewBox="0 0 9 9" style="left:2px;top:2px"><path d="M1.300 3.600 L3.700 6.800 L7.800 .600" fill="none" stroke="#2a55b8" stroke-width="1.900"/></svg></div>
<div class="c" style="left:252px;width:111px">LOT0030</div>
<div class="c" style="left:363px;width:125px">3------0000000126</div>
<div class="c" style="left:488px;width:100px">0000000126</div>
<div class="c" style="left:588px;width:100px">GRE</div>
<div class="c" style="left:688px;width:100px">AMERICA</div>
<div class="c" style="left:788px;width:100px">COTTON</div>
<div class="c" style="left:888px;width:100px">BLU</div>
<div class="c" style="left:988px;width:100px"></div>
<div class="c" style="left:1088px;width:40px">EFP</div>
<div class="c" style="left:1128px;width:100px">Entries from production</div>
<div class="c" style="left:1228px;width:100px">m</div>
<div class="c r" style="left:1328px;width:148px">100.00000</div>
<div class="c" style="left:1476px;width:55px">FIB</div>
<div class="c" style="left:1531px;width:100px">02.13.2019</div>
<div class="c" style="left:1631px;width:100px">IN1959</div>
<div class="c" style="left:1731px;width:100px">000000</div>
<div class="c" style="left:1831px;width:100px"></div>
</div>
<div class="gr" style="top:212px;background:#ffff99;border-bottom-color:#f0f0d8">
<div class="cb" style="left:19px;top:1px"></div>
<div class="c" style="left:50px;width:100px">NOW-000002</div>
<div class="cb on" style="left:156px;top:3px"><svg width="9" height="9" viewBox="0 0 9 9" style="left:2px;top:2px"><path d="M1.300 3.600 L3.700 6.800 L7.800 .600" fill="none" stroke="#2a55b8" stroke-width="1.900"/></svg></div>
<div class="cb on" style="left:205px;top:3px"><svg width="9" height="9" viewBox="0 0 9 9" style="left:2px;top:2px"><path d="M1.300 3.600 L3.700 6.800 L7.800 .600" fill="none" stroke="#2a55b8" stroke-width="1.900"/></svg></div>
<div class="c" style="left:252px;width:111px">LOT0031</div>
<div class="c" style="left:363px;width:125px">3------0000000126</div>
<div class="c" style="left:488px;width:100px">0000000126</div>
<div class="c" style="left:588px;width:100px">GRE</div>
<div class="c" style="left:688px;width:100px">AMERICA</div>
<div class="c" style="left:788px;width:100px">COTTON</div>
<div class="c" style="left:888px;width:100px">BLU</div>
<div class="c" style="left:988px;width:100px"></div>
<div class="c" style="left:1088px;width:40px">EFP</div>
<div class="c" style="left:1128px;width:100px">Entries from production</div>
<div class="c" style="left:1228px;width:100px">m</div>
<div class="c r" style="left:1328px;width:148px">100.00000</div>
<div class="c" style="left:1476px;width:55px">FIB</div>
<div class="c" style="left:1531px;width:100px">02.13.2019</div>
<div class="c" style="left:1631px;width:100px">IN1959</div>
<div class="c" style="left:1731px;width:100px">000000</div>
<div class="c" style="left:1831px;width:100px"></div>
</div>
<div class="gr" style="top:233px;background:#ffff99;border-bottom-color:#f0f0d8">
<div class="cb" style="left:19px;top:1px"></div>
<div class="c" style="left:50px;width:100px">NOW-000002</div>
<div class="cb on" style="left:156px;top:3px"><svg width="9" height="9" viewBox="0 0 9 9" style="left:2px;top:2px"><path d="M1.300 3.600 L3.700 6.800 L7.800 .600" fill="none" stroke="#2a55b8" stroke-width="1.900"/></svg></div>
<div class="cb on" style="left:205px;top:3px"><svg width="9" height="9" viewBox="0 0 9 9" style="left:2px;top:2px"><path d="M1.300 3.600 L3.700 6.800 L7.800 .600" fill="none" stroke="#2a55b8" stroke-width="1.900"/></svg></div>
<div class="c" style="left:252px;width:111px">LOT0032</div>
<div class="c" style="left:363px;width:125px">3------0000000126</div>
<div class="c" style="left:488px;width:100px">0000000126</div>
<div class="c" style="left:588px;width:100px">GRE</div>
<div class="c" style="left:688px;width:100px">AMERICA</div>
<div class="c" style="left:788px;width:100px">COTTON</div>
<div class="c" style="left:888px;width:100px">BLU</div>
<div class="c" style="left:988px;width:100px"></div>
<div class="c" style="left:1088px;width:40px">EFP</div>
<div class="c" style="left:1128px;width:100px">Entries from production</div>
<div class="c" style="left:1228px;width:100px">m</div>
<div class="c r" style="left:1328px;width:148px">100.00000</div>
<div class="c" style="left:1476px;width:55px">FIB</div>
<div class="c" style="left:1531px;width:100px">02.13.2019</div>
<div class="c" style="left:1631px;width:100px">IN1959</div>
<div class="c" style="left:1731px;width:100px">000000</div>
<div class="c" style="left:1831px;width:100px"></div>
</div>
<div class="gr" style="top:254px;background:#ffff99;border-bottom-color:#f0f0d8">
<div class="cb" style="left:19px;top:1px"></div>
<div class="c" style="left:50px;width:100px">NOW-000002</div>
<div class="cb on" style="left:156px;top:3px"><svg width="9" height="9" viewBox="0 0 9 9" style="left:2px;top:2px"><path d="M1.300 3.600 L3.700 6.800 L7.800 .600" fill="none" stroke="#2a55b8" stroke-width="1.900"/></svg></div>
<div class="cb on" style="left:205px;top:3px"><svg width="9" height="9" viewBox="0 0 9 9" style="left:2px;top:2px"><path d="M1.300 3.600 L3.700 6.800 L7.800 .600" fill="none" stroke="#2a55b8" stroke-width="1.900"/></svg></div>
<div class="c" style="left:252px;width:111px">LOT0033</div>
<div class="c" style="left:363px;width:125px">3------0000000126</div>
<div class="c" style="left:488px;width:100px">0000000126</div>
<div class="c" style="left:588px;width:100px">GRE</div>
<div class="c" style="left:688px;width:100px">AMERICA</div>
<div class="c" style="left:788px;width:100px">COTTON</div>
<div class="c" style="left:888px;width:100px">BLU</div>
<div class="c" style="left:988px;width:100px"></div>
<div class="c" style="left:1088px;width:40px">EFP</div>
<div class="c" style="left:1128px;width:100px">Entries from production</div>
<div class="c" style="left:1228px;width:100px">m</div>
<div class="c r" style="left:1328px;width:148px">100.00000</div>
<div class="c" style="left:1476px;width:55px">FIB</div>
<div class="c" style="left:1531px;width:100px">02.13.2019</div>
<div class="c" style="left:1631px;width:100px">IN1959</div>
<div class="c" style="left:1731px;width:100px">000000</div>
<div class="c" style="left:1831px;width:100px"></div>
</div>
<div class="gr" style="top:275px;background:#ffff99;border-bottom-color:#f0f0d8">
<div class="cb" style="left:19px;top:1px"></div>
<div class="c" style="left:50px;width:100px">NOW-000002</div>
<div class="cb on" style="left:156px;top:3px"><svg width="9" height="9" viewBox="0 0 9 9" style="left:2px;top:2px"><path d="M1.300 3.600 L3.700 6.800 L7.800 .600" fill="none" stroke="#2a55b8" stroke-width="1.900"/></svg></div>
<div class="cb on" style="left:205px;top:3px"><svg width="9" height="9" viewBox="0 0 9 9" style="left:2px;top:2px"><path d="M1.300 3.600 L3.700 6.800 L7.800 .600" fill="none" stroke="#2a55b8" stroke-width="1.900"/></svg></div>
<div class="c" style="left:252px;width:111px">LOT0034</div>
<div class="c" style="left:363px;width:125px">3------0000000126</div>
<div class="c" style="left:488px;width:100px">0000000126</div>
<div class="c" style="left:588px;width:100px">GRE</div>
<div class="c" style="left:688px;width:100px">AMERICA</div>
<div class="c" style="left:788px;width:100px">COTTON</div>
<div class="c" style="left:888px;width:100px">BLU</div>
<div class="c" style="left:988px;width:100px"></div>
<div class="c" style="left:1088px;width:40px">EFP</div>
<div class="c" style="left:1128px;width:100px">Entries from production</div>
<div class="c" style="left:1228px;width:100px">m</div>
<div class="c r" style="left:1328px;width:148px">100.00000</div>
<div class="c" style="left:1476px;width:55px">FIB</div>
<div class="c" style="left:1531px;width:100px">02.13.2019</div>
<div class="c" style="left:1631px;width:100px">IN1959</div>
<div class="c" style="left:1731px;width:100px">000000</div>
<div class="c" style="left:1831px;width:100px"></div>
</div>
<div class="gr" style="top:296px;background:#e4e4e4;border-bottom-color:#ededed">
<div class="c0" style="background:#fff"></div>
<div class="cb" style="left:19px;top:1px"></div>
<div class="c" style="left:50px;width:100px">NOW-000002</div>
<div class="cb" style="left:156px;top:3px"></div>
<div class="cb" style="left:205px;top:3px"></div>
<div class="c" style="left:252px;width:111px">0000000126</div>
<div class="c" style="left:363px;width:125px">4--------LOT0035</div>
<div class="c" style="left:488px;width:100px">LOT0035</div>
<div class="c" style="left:588px;width:100px">FIN</div>
<div class="c" style="left:688px;width:100px">A01LOT</div>
<div class="c" style="left:788px;width:100px">COTTON</div>
<div class="c" style="left:888px;width:100px">AZZURRO</div>
<div class="c" style="left:988px;width:100px">42</div>
<div class="c" style="left:1088px;width:40px">EFP</div>
<div class="c" style="left:1128px;width:100px">Entries from production</div>
<div class="c" style="left:1228px;width:100px">m</div>
<div class="c r" style="left:1328px;width:148px">100.00000</div>
<div class="c" style="left:1476px;width:55px">FIB</div>
<div class="c" style="left:1531px;width:100px">02.13.2019</div>
<div class="c" style="left:1631px;width:100px">IN1959</div>
<div class="c" style="left:1731px;width:100px">000000</div>
<div class="c" style="left:1831px;width:100px"></div>
</div>
<div class="gr" style="top:317px;background:#e4e4e4;border-bottom-color:#ededed">
<div class="c0" style="background:#fafafa"></div>
<div class="cb" style="left:19px;top:1px"></div>
<div class="c" style="left:50px;width:100px">NOW-000002</div>
<div class="cb" style="left:156px;top:3px"></div>
<div class="cb" style="left:205px;top:3px"></div>
<div class="c" style="left:252px;width:111px">LOT0035</div>
<div class="c" style="left:363px;width:125px">5----------LOT0035</div>
<div class="c" style="left:488px;width:100px">LOT0035</div>
<div class="c" style="left:588px;width:100px">FIN</div>
<div class="c" style="left:688px;width:100px">A01LOT</div>
<div class="c" style="left:788px;width:100px">COTTON</div>
<div class="c" style="left:888px;width:100px">AZZURRO</div>
<div class="c" style="left:988px;width:100px">42</div>
<div class="c" style="left:1088px;width:40px">STC</div>
<div class="c" style="left:1128px;width:100px">Shipments to customers</div>
<div class="c" style="left:1228px;width:100px">m</div>
<div class="c r" style="left:1328px;width:148px">100.00000</div>
<div class="c" style="left:1476px;width:55px">FIB</div>
<div class="c" style="left:1531px;width:100px">02.13.2019</div>
<div class="c" style="left:1631px;width:100px">IN1959</div>
<div class="c" style="left:1731px;width:100px">000000</div>
<div class="c" style="left:1831px;width:100px"></div>
</div>
<div id="hsb"><svg width="17" height="17" viewBox="0 0 17 17" style="left:0;top:0"><path d="M10.500 5 L6.500 8.500 L10.500 12z" fill="#a3a3a3"/></svg><div class="th"></div><svg width="17" height="17" viewBox="0 0 17 17" style="left:1893px;top:0"><path d="M6.500 5 L10.500 8.500 L6.500 12z" fill="#505050"/></svg></div>
</div>
<div id="pg">
<svg width="12" height="12" viewBox="0 0 12 12" style="left:6px;top:5px"><path d="M1.500 1v10" stroke="#b3b8c4" stroke-width="1.600"/><path d="M10 1 L3.500 6 L10 11z" fill="#b3b8c4"/></svg>
<svg width="12" height="12" viewBox="0 0 12 12" style="left:30px;top:5px"><path d="M9 1 L2.500 6 L9 11z" fill="#b3b8c4"/></svg>
<div class="sep" style="left:49px"></div>
<div class="t" style="left:57px;top:5px;color:#222">Page</div>
<div class="inp">1</div>
<div class="t" style="left:125px;top:5px;color:#222">of 1</div>
<div class="sep" style="left:150px"></div>
<svg width="12" height="12" viewBox="0 0 12 12" style="left:159px;top:5px"><path d="M3 1 L9.500 6 L3 11z" fill="#b3b8c4"/></svg>
<svg width="12" height="12" viewBox="0 0 12 12" style="left:182px;top:5px"><path d="M2 1 L8.500 6 L2 11z" fill="#b3b8c4"/><path d="M10.500 1v10" stroke="#b3b8c4" stroke-width="1.600"/></svg>
<div class="sep" style="left:202px"></div>
<svg width="16" height="16" viewBox="0 0 16 16" style="left:209px;top:3px"><path d="M2.500 7 A5.500 5.500 0 0 1 12.500 4.500" fill="none" stroke="#4a7dcc" stroke-width="2"/><path d="M14.500 1.500 L14 7 L9 5z" fill="#4a7dcc"/><path d="M13.500 9 A5.500 5.500 0 0 1 3.500 11.500" fill="none" stroke="#4a7dcc" stroke-width="2"/><path d="M1.500 14.500 L2 9 L7 11z" fill="#4a7dcc"/></svg>
<div class="t" style="right:8px;top:5px;color:#222">Items 1 - 14 of 14</div>
</div>
</body></html>
